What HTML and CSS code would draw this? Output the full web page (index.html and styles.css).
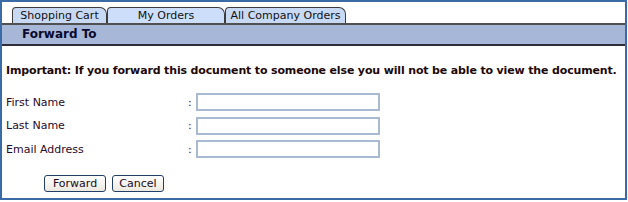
FILE: index.html
```html
<!DOCTYPE html>
<html lang="en">
<head>
    <meta charset="UTF-8">
    <title>Forward To</title>
    <link rel="stylesheet" href="styles.css">
</head>
<body>

    <div class="frame">
        <div class="tabs">
            <span class="tab tab-cart">Shopping Cart</span>
            <span class="tab tab-orders">My Orders</span>
            <span class="tab tab-company">All Company Orders</span>
        </div>

        <div class="section-bar">Forward To</div>

        <p class="important">Important: If you forward this document to someone else you will not be able to view the document.</p>

        <div class="form-grid">
            <label class="label">First Name</label>
            <span class="colon">:</span>
            <input type="text" class="field">

            <label class="label">Last Name</label>
            <span class="colon">:</span>
            <input type="text" class="field">

            <label class="label">Email Address</label>
            <span class="colon">:</span>
            <input type="text" class="field">
        </div>

        <div class="buttons">
            <button type="button" class="btn btn-forward">Forward</button>
            <button type="button" class="btn btn-cancel">Cancel</button>
        </div>
    </div>

</body>
</html>
```

FILE: styles.css
```css
body {
    margin: 0;
    padding: 0;
    font-family: Verdana, 'DejaVu Sans', sans-serif;
    font-size: 11px;
    color: #1a0a1a;
    background: #fff;
}

.frame {
    width: 623px;
    height: 196px;
    border: 2px solid #3a6ba6;
    background: #fff;
}

.tabs {
    display: flex;
    padding: 5px 0 0 10px;
    height: 16px;
}

.tab {
    box-sizing: border-box;
    height: 16px;
    line-height: 15px;
    text-align: center;
    background: #c8d9f4;
    border: 1px solid #3d3d3d;
    border-bottom: none;
    border-radius: 4px 7px 0 0;
    color: #111;
    font-size: 11px;
}

.tab-cart {
    width: 95px;
}

.tab-orders {
    width: 118px;
    background: #cddefa;
}

.tab-company {
    width: 121px;
}

.section-bar {
    height: 19px;
    line-height: 19px;
    padding-left: 20px;
    background: #a6b7d7;
    border-top: 2px solid #505050;
    border-bottom: 2px solid #2e2e3a;
    font-weight: bold;
    font-size: 12px;
    color: #0a0a30;
}

.important {
    margin: 18px 0 0 4px;
    font-weight: bold;
    font-size: 11px;
    letter-spacing: -0.15px;
    color: #200808;
    white-space: nowrap;
}

.form-grid {
    display: grid;
    grid-template-columns: 182px 8px 184px;
    grid-auto-rows: 18px;
    row-gap: 5.5px;
    align-items: center;
    margin: 16px 0 0 4px;
}

.label {
    color: #2a0a2a;
}

.colon {
    color: #500050;
}

.field {
    box-sizing: border-box;
    width: 184px;
    height: 18px;
    margin: 0;
    border: 2px solid #a8bbd3;
    font-family: inherit;
    font-size: 11px;
}

.buttons {
    display: flex;
    gap: 6px;
    padding: 17px 0 0 42px;
}

.btn {
    box-sizing: border-box;
    height: 17px;
    padding: 0;
    border: 1px solid #243f66;
    border-radius: 3px;
    background: linear-gradient(#ffffff, #ece9df);
    font-family: inherit;
    font-size: 11px;
    color: #1a0a1a;
    line-height: 14px;
}

.btn-forward {
    width: 62px;
}

.btn-cancel {
    width: 52px;
}
```
